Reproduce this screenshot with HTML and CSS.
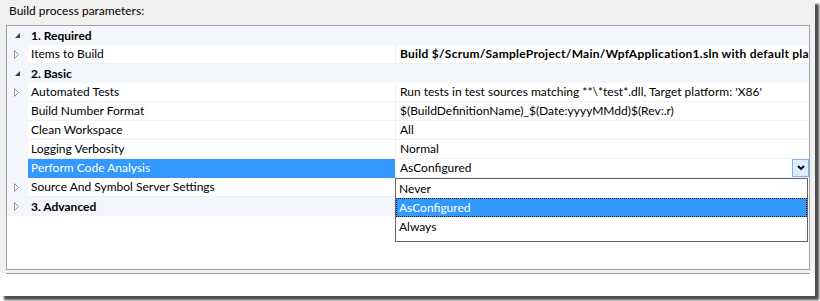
FILE: index.html
```html
<!DOCTYPE html>
<html>
<head>
<meta charset="utf-8">
<link rel="stylesheet" href="styles.css">
</head>
<body>
<div class="window">
  <div class="title">Build process parameters:</div>
  <div class="panel">
    <div class="grid">
      <div class="row cat">
        <span class="gut"><svg class="exp" width="6" height="6" viewBox="0 0 6 6"><polygon points="5,0 5,5 0,5"/></svg></span>
        <span class="catlabel">1. Required</span>
      </div>
      <div class="row item">
        <span class="gut"><svg class="col" width="6" height="9" viewBox="0 0 6 9"><polygon points="0.5,0.5 4.5,4.5 0.5,8.5"/></svg></span>
        <span class="name">Items to Build</span>
        <span class="val strong">Build $/Scrum/SampleProject/Main/WpfApplication1.sln with default plat</span>
      </div>
      <div class="row cat">
        <span class="gut"><svg class="exp" width="6" height="6" viewBox="0 0 6 6"><polygon points="5,0 5,5 0,5"/></svg></span>
        <span class="catlabel">2. Basic</span>
      </div>
      <div class="row item">
        <span class="gut"><svg class="col" width="6" height="9" viewBox="0 0 6 9"><polygon points="0.5,0.5 4.5,4.5 0.5,8.5"/></svg></span>
        <span class="name">Automated Tests</span>
        <span class="val">Run tests in test sources matching **\*test*.dll, Target platform: 'X86'</span>
      </div>
      <div class="row item">
        <span class="gut"></span>
        <span class="name">Build Number Format</span>
        <span class="val">$(BuildDefinitionName)_$(Date:yyyyMMdd)$(Rev:.r)</span>
      </div>
      <div class="row item">
        <span class="gut"></span>
        <span class="name">Clean Workspace</span>
        <span class="val">All</span>
      </div>
      <div class="row item">
        <span class="gut"></span>
        <span class="name">Logging Verbosity</span>
        <span class="val">Normal</span>
      </div>
      <div class="row item selected">
        <span class="gut"></span>
        <span class="name">Perform Code Analysis</span>
        <span class="val edit">
          <span class="edittext">AsConfigured</span>
          <span class="dropbtn"><svg width="8" height="6" viewBox="0 0 8 6"><polyline points="1,1 4,4 7,1"/></svg></span>
        </span>
      </div>
      <div class="row item">
        <span class="gut"><svg class="col" width="6" height="9" viewBox="0 0 6 9"><polygon points="0.5,0.5 4.5,4.5 0.5,8.5"/></svg></span>
        <span class="name">Source And Symbol Server Settings</span>
        <span class="val"></span>
      </div>
      <div class="row cat">
        <span class="gut"><svg class="col" width="6" height="9" viewBox="0 0 6 9"><polygon points="0.5,0.5 4.5,4.5 0.5,8.5"/></svg></span>
        <span class="catlabel">3. Advanced</span>
      </div>
    </div>
    <div class="dropdown">
      <div class="opt">Never</div>
      <div class="opt active">AsConfigured</div>
      <div class="opt">Always</div>
    </div>
  </div>
  <div class="footer"><div class="rule"></div></div>
</div>
</body>
</html>
```

FILE: styles.css
```css
* { box-sizing: border-box; }
html, body { margin: 0; padding: 0; background: #ffffff; }
body {
  width: 820px;
  height: 301px;
  overflow: hidden;
  font-family: Lato, "Open Sans", sans-serif;
  font-size: 12px;
  color: #000;
}
.window {
  width: 815px;
  height: 296px;
  background: #f0f0f0;
  box-shadow: 4px 4px 2px rgba(0, 0, 0, 0.7);
  display: flex;
  flex-direction: column;
}
.title {
  height: 25px;
  padding: 3px 0 0 9px;
  line-height: 16px;
}
.panel {
  position: relative;
  margin-left: 6px;
  width: 804px;
  height: 245px;
  border: 1px solid #a0a0a0;
  background: #ffffff;
  overflow: hidden;
}
.grid {
  display: flex;
  flex-direction: column;
}
.row {
  display: grid;
  grid-template-columns: 21px 367px 1fr;
  height: 19px;
  line-height: 18px;
  white-space: nowrap;
}
.row .gut {
  background: #f3f6fb;
  display: flex;
  align-items: center;
  justify-content: flex-end;
  padding-right: 7px;
}
.cat { background: #f3f6fb; }
.cat .catlabel {
  grid-column: 2 / 4;
  font-weight: 700;
  padding-left: 3px;
  line-height: 19px;
}
.item .name, .item .val {
  background: #fff;
  border-bottom: 1px solid #f0f0f0;
  overflow: hidden;
}
.item .name { padding-left: 3px; }
.item .val {
  border-left: 1px solid #f0f0f0;
  padding-left: 4px;
}
.strong { font-weight: 700; letter-spacing: 0.25px; }
.exp polygon { fill: #404040; }
.exp { margin-top: 1px; }
.col polygon { fill: none; stroke: #9a9a9a; stroke-width: 1; }
.col { margin-right: 1px; }
.selected .name {
  background: #3399ff;
  color: #fff;
  border-bottom-color: #3399ff;
}
.edit {
  display: flex;
  align-items: center;
  justify-content: space-between;
}
.dropbtn {
  width: 17px;
  height: 18px;
  background: #dcecfc;
  border: 1px solid #7eb4ea;
  display: flex;
  align-items: center;
  justify-content: center;
}
.dropbtn polyline { fill: none; stroke: #000; stroke-width: 1.8; }
.dropdown {
  position: absolute;
  left: 388px;
  top: 152px;
  width: 413px;
  height: 64px;
  border: 1px solid #646464;
  background: #fff;
}
.opt {
  height: 19px;
  line-height: 18px;
  padding-left: 2px;
  border: 1px solid transparent;
}
.opt.active {
  background: #3399ff;
  color: #fff;
  border: 1px dotted #1a1a1a;
}
.footer {
  margin-top: 3px;
  flex: 1;
  background: #fff;
}
.rule {
  margin: 0 5px 0 6px;
  border-top: 1px solid #a0a0a0;
}
```
